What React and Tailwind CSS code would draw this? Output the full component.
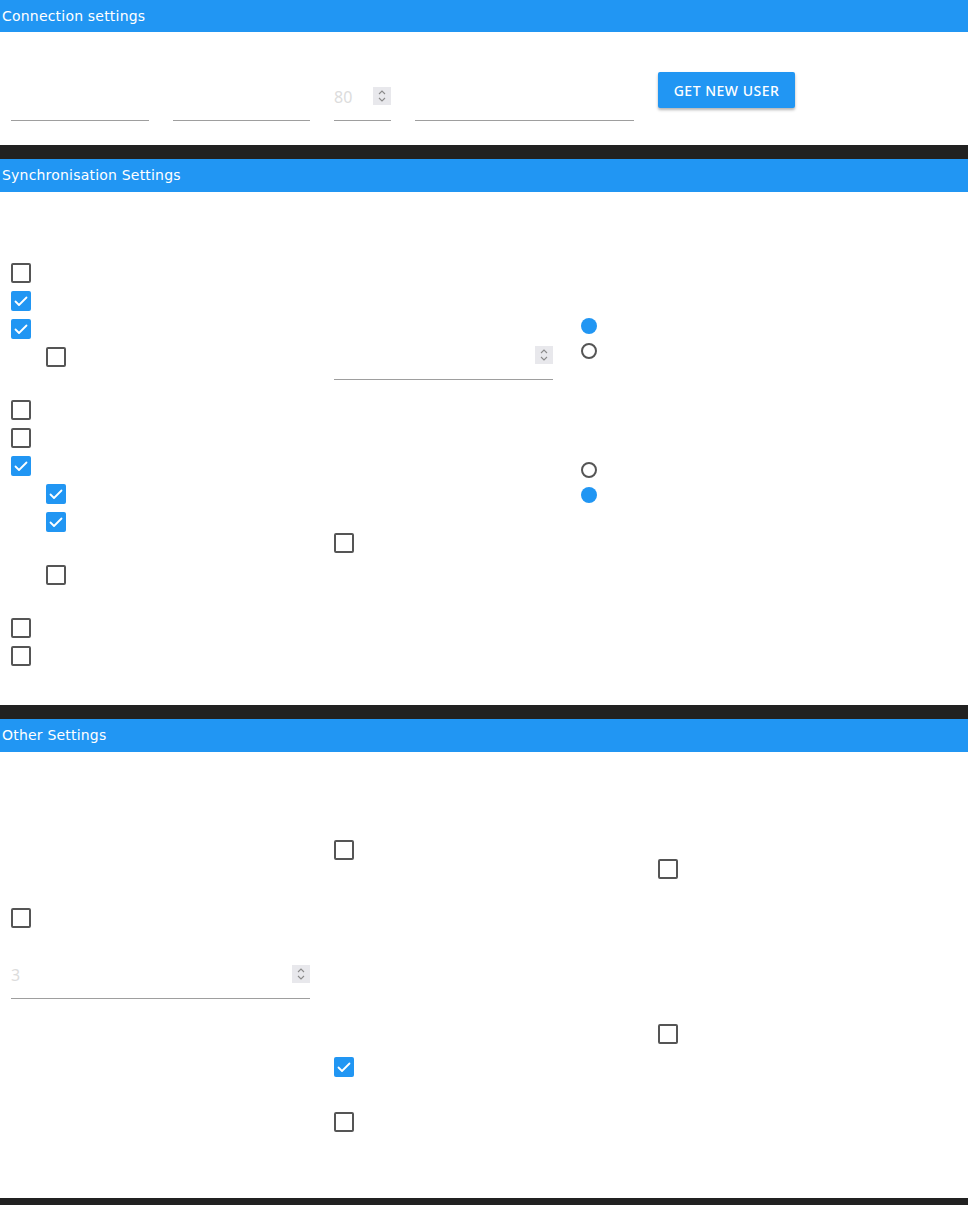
import React from 'react';

const headerFont = { fontFamily: '"DejaVu Sans", sans-serif' };
const bodyFont = { fontFamily: '"Noto Sans", "Open Sans", sans-serif' };

const Header = ({ title, first }) => (
  <div className={`${first ? 'h-[32px]' : 'h-[33px]'} bg-[#2196f3] text-white text-[14px] tracking-[0.2px] flex items-center px-[2px]`} style={headerFont}>
    {title}
  </div>
);

const Divider = () => <div className="h-[14px] bg-[#212121]" />;

const Checkbox = ({ checked, className = '' }) => (
  <div
    className={`w-[20px] h-[20px] rounded-[2px] flex items-center justify-center shrink-0 ${
      checked ? 'bg-[#2196f3]' : 'border-2 border-[#555555]'
    } ${className}`}
  >
    {checked && (
      <svg width="20" height="20" viewBox="0 0 20 20" fill="none">
        <path d="M4.5 10.5 L8 14 L15.5 6.5" stroke="white" strokeWidth="1.8" strokeLinecap="round" strokeLinejoin="round" />
      </svg>
    )}
  </div>
);

const Radio = ({ checked, className = '' }) => (
  <div
    className={`w-[16px] h-[16px] rounded-full shrink-0 ${
      checked ? 'bg-[#2196f3]' : 'border-2 border-[#555555]'
    } ${className}`}
  />
);

const Spinner = () => (
  <div className="w-[18px] h-[18px] bg-[#e8e8ec] flex items-center justify-center shrink-0">
    <svg width="10" height="14" viewBox="0 0 10 14" fill="none">
      <path d="M2 5 L5 2 L8 5" stroke="#8a8a8a" strokeWidth="1.1" />
      <path d="M2 9 L5 12 L8 9" stroke="#8a8a8a" strokeWidth="1.1" />
    </svg>
  </div>
);

const Field = ({ width, value, number, className = '' }) => (
  <div className={`${width} h-[37px] border-b border-[#9e9e9e] flex items-start justify-between pt-[3px] ${className}`}>
    <span className="text-[16px] leading-[20px] text-[#dcdcdc]" style={bodyFont}>{value}</span>
    {number && <Spinner />}
  </div>
);

// row of 28px holding one checkbox
const CheckRow = ({ checked, nested }) => (
  <div className={`h-[28px] flex items-center ${nested ? 'pl-[35px]' : ''}`}>
    <Checkbox checked={checked} />
  </div>
);

export default function App() {
  return (
    <div className="w-full bg-white" style={bodyFont}>
      {/* Connection settings */}
      <Header title="Connection settings" first />
      <div className="flex items-start gap-[24px] px-[11px] pb-[24px]">
        <Field width="w-[138px]" className="mt-[52px]" />
        <Field width="w-[137px]" className="mt-[52px]" />
        <Field width="w-[57px]" className="mt-[52px]" value="80" number />
        <Field width="w-[219px]" className="mt-[52px]" />
        <button
          className="mt-[40px] w-[137px] h-[36px] bg-[#2196f3] text-white text-[14px] font-medium tracking-[0.5px] rounded-[2px] shadow-[0_2px_3px_rgba(0,0,0,0.3)]"
          style={bodyFont}
        >
          GET NEW USER
        </button>
      </div>
      <Divider />

      {/* Synchronisation Settings */}
      <Header title="Synchronisation Settings" />
      <div className="flex items-start px-[11px] pb-[35px]">
        <div className="w-[323px] flex flex-col pt-[67px]">
          <CheckRow />
          <CheckRow checked />
          <CheckRow checked />
          <CheckRow nested />
          <div className="mt-[25px]">
            <CheckRow />
            <CheckRow />
            <CheckRow checked />
            <CheckRow checked nested />
            <CheckRow checked nested />
          </div>
          <div className="mt-[25px]">
            <CheckRow nested />
          </div>
          <div className="mt-[25px]">
            <CheckRow />
            <CheckRow />
          </div>
        </div>
        <div className="w-[247px] flex flex-col">
          <Field width="w-[219px]" className="mt-[151px]" number />
          <Checkbox className="mt-[153px]" />
        </div>
        <div className="flex flex-col">
          <Radio checked className="mt-[126px]" />
          <Radio className="mt-[9px]" />
          <Radio className="mt-[103px]" />
          <Radio checked className="mt-[9px]" />
        </div>
      </div>
      <Divider />

      {/* Other Settings */}
      <Header title="Other Settings" />
      <div className="flex items-start px-[11px] pb-[66px]">
        <div className="w-[323px] flex flex-col">
          <Checkbox className="mt-[156px]" />
          <Field width="w-[299px]" className="mt-[34px]" value="3" number />
        </div>
        <div className="w-[324px] flex flex-col">
          <Checkbox className="mt-[88px]" />
          <Checkbox checked className="mt-[197px]" />
          <Checkbox className="mt-[35px]" />
        </div>
        <div className="flex flex-col">
          <Checkbox className="mt-[107px]" />
          <Checkbox className="mt-[145px]" />
        </div>
      </div>
      <Divider />
    </div>
  );
}
